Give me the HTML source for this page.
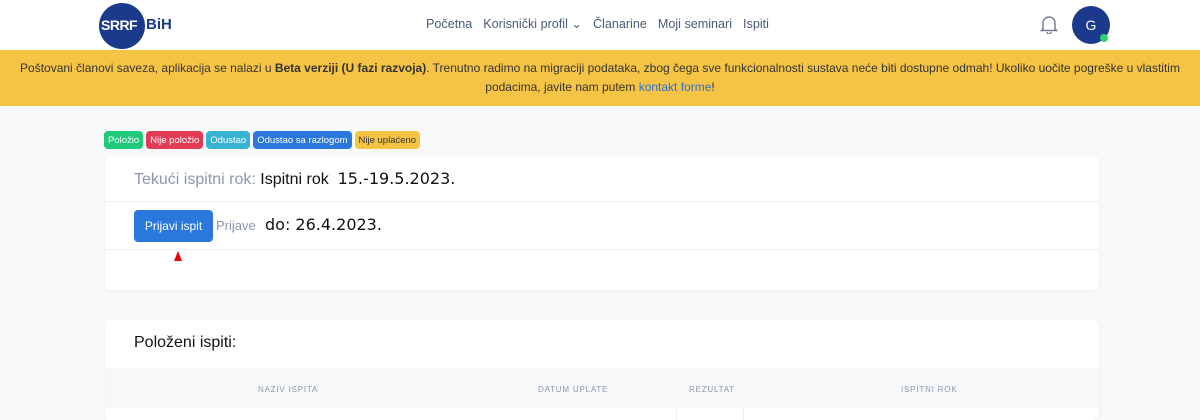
<!DOCTYPE html><html><head><meta charset="utf-8"><style>
body{margin:0;width:1200px;height:412px;overflow:hidden;background:#f8f9fb;font-family:"Liberation Sans","DejaVu Sans",sans-serif;}
.nav{height:50px;background:#fff;position:relative}
.logo{position:absolute;left:99px;top:3px;width:46px;height:46px;border-radius:50%;background:#1b3a8c}
.logo span{position:absolute;left:2px;top:14px;color:#fff;font-weight:bold;font-size:14px;letter-spacing:-.5px}
.bih{position:absolute;left:146px;top:16px;color:#1b3a8c;font-weight:bold;font-size:15px}
.links{position:absolute;left:426px;top:16px;font-size:12.6px;color:#4a5a78}
.links span{margin-right:11px}
.bell{position:absolute;left:1040px;top:14px}
.av{position:absolute;left:1072px;top:6px;width:38px;height:38px;border-radius:50%;background:#1b3a8c;color:#fff;text-align:center;line-height:38px;font-size:14px}
.dot{position:absolute;left:1100px;top:34px;width:8px;height:8px;border-radius:50%;background:#2dd36f}
.banner{height:56px;background:#f6c445;text-align:center;font-size:12px;color:#333;line-height:19px;box-sizing:border-box;padding:9px 10px 0;white-space:nowrap}
.banner a{color:#2a6fd8;text-decoration:none}
.badges{position:absolute;left:104px;top:131px;display:flex;gap:3px}
.b{display:block;font-size:9.5px;color:#fff;padding:0 4px;border-radius:4px;height:18px;line-height:19px}
.card{position:absolute;left:105px;width:994px;background:#fff;border-radius:6px;box-shadow:0 1px 4px rgba(0,0,0,.05)}
.row{border-bottom:1px solid #eef0f3}
.btn{position:absolute;left:29px;top:55px;width:79px;height:32px;background:#2b78dc;color:#fff;border-radius:4px;font-size:12px;line-height:32px;text-align:center}
.dj{font-family:"DejaVu Sans",sans-serif}
</style></head><body>
<div class="nav"><div class="logo"><span>SRRF</span></div><div class="bih">BiH</div>
<div class="links"><span>Početna</span><span>Korisnički profil ⌄</span><span>Članarine</span><span>Moji seminari</span><span>Ispiti</span></div>
<svg class="bell" width="18" height="20" viewBox="0 0 18 20"><path d="M3 15V9a6 6 0 0 1 12 0v6l1.5 1.5h-15z M7 18a2 2 0 0 0 4 0" fill="none" stroke="#6b7a90" stroke-width="1.4"/></svg>
<div class="av">G</div><div class="dot"></div></div>
<div class="banner">Poštovani članovi saveza, aplikacija se nalazi u <b>Beta verziji (U fazi razvoja)</b>. Trenutno radimo na migraciji podataka, zbog čega sve funkcionalnosti sustava neće biti dostupne odmah! Ukoliko uočite pogreške u vlastitim<br>podacima, javite nam putem <a>kontakt forme</a>!</div>
<div class="badges"><span class="b" style="background:#1ec97a">Položio</span><span class="b" style="background:#e23b55">Nije položio</span><span class="b" style="background:#36b3d2">Odustao</span><span class="b" style="background:#2b78dc">Odustao sa razlogom</span><span class="b" style="background:#f6c445;color:#333">Nije uplaćeno</span></div>
<div class="card" style="top:155px;height:135px">
<div class="row" style="height:46px;position:relative"><div style="position:absolute;left:29px;top:14px;font-size:16px;color:#8a97ad">Tekući ispitni rok: <span style="color:#111">Ispitni rok &nbsp;<span class="dj">15.-19.5.2023.</span></span></div></div>
<div class="row" style="height:47px"></div>
<div class="btn">Prijavi ispit</div>
<div style="position:absolute;left:111px;top:63px;font-size:13px;color:#8a97ad">Prijave</div>
<div class="dj" style="position:absolute;left:160px;top:60px;font-size:16px;color:#111">do: 26.4.2023.</div>
<svg style="position:absolute;left:69px;top:96px" width="8" height="12"><path d="M4 0L8 10H0z" fill="#e00"/></svg>
</div>
<div class="card" style="top:320px;height:100px">
<div style="height:48px;position:relative"><div style="position:absolute;left:29px;top:14px;font-size:16px;color:#111">Položeni ispiti:</div></div>
<div style="background:#f7f8fa;height:40px;position:relative;font-size:8px;color:#8a97ad;letter-spacing:.8px">
<span style="position:absolute;left:153px;top:17px">NAZIV ISPITA</span>
<span style="position:absolute;left:433px;top:17px">DATUM UPLATE</span>
<span style="position:absolute;left:584px;top:17px">REZULTAT</span>
<span style="position:absolute;left:796px;top:17px">ISPITNI ROK</span></div>
<div style="position:absolute;left:571px;top:88px;width:66px;height:12px;border-left:1px solid #eef0f3;border-right:1px solid #eef0f3"></div>
</div>
</body></html>
